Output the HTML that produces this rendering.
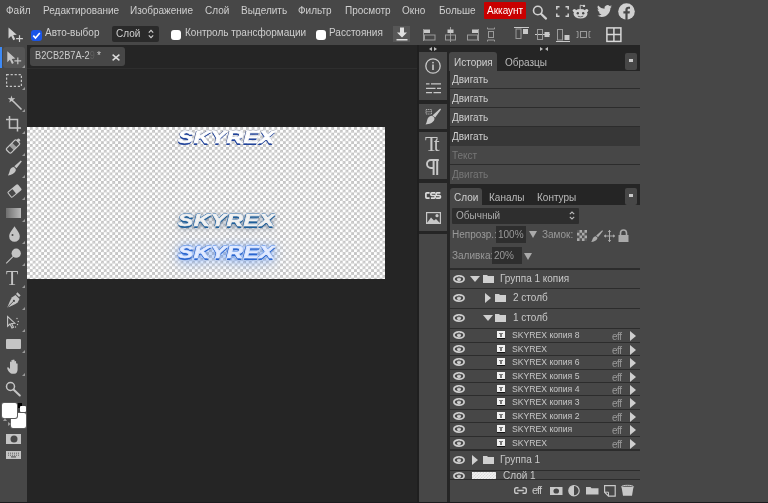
<!DOCTYPE html>
<html><head><meta charset="utf-8"><style>
*{margin:0;padding:0;box-sizing:border-box}
html,body{width:768px;height:503px;overflow:hidden;background:#474747;font-family:"Liberation Sans",sans-serif;font-size:10px;color:#cfcfcf}
.a{position:absolute}
.t{position:absolute;white-space:nowrap;line-height:12px}
svg{position:absolute;overflow:visible}
</style></head><body><div style="position:absolute;left:0;top:0;width:768px;height:503px;overflow:hidden;will-change:transform">
<div class="t" style="left:6px;top:5px;">Файл</div>
<div class="t" style="left:43px;top:5px;">Редактирование</div>
<div class="t" style="left:130px;top:5px;">Изображение</div>
<div class="t" style="left:205px;top:5px;">Слой</div>
<div class="t" style="left:241px;top:5px;">Выделить</div>
<div class="t" style="left:298px;top:5px;">Фильтр</div>
<div class="t" style="left:345px;top:5px;">Просмотр</div>
<div class="t" style="left:402px;top:5px;">Окно</div>
<div class="t" style="left:439px;top:5px;">Больше</div>
<div class="a" style="left:484px;top:2px;width:42px;height:17px;background:#c80000;border-radius:1px"></div>
<div class="t" style="left:487px;top:5px;color:#fff;">Аккаунт</div>
<svg style="left:532px;top:5px" width="16" height="15" viewBox="0 0 16 15"><circle cx="5.8" cy="5.5" r="4.3" fill="none" stroke="#d0d0d0" stroke-width="1.6"/><path d="M9 8.8L14 13.6" stroke="#d0d0d0" stroke-width="2.2" stroke-linecap="round"/></svg>
<svg style="left:556px;top:6px" width="13" height="11" viewBox="0 0 13 11"><path d="M0.8 3.5V0.8H3.5M9.5 0.8H12.2V3.5M12.2 7.5V10.2H9.5M3.5 10.2H0.8V7.5" fill="none" stroke="#d0d0d0" stroke-width="1.5"/></svg>
<svg style="left:572px;top:3px" width="17" height="16" viewBox="0 0 17 16"><ellipse cx="8.5" cy="10.8" rx="7" ry="4.8" fill="#d0d0d0"/><circle cx="2.4" cy="7.6" r="1.7" fill="#d0d0d0"/><circle cx="14.6" cy="7.6" r="1.7" fill="#d0d0d0"/><circle cx="5.8" cy="10.3" r="1.2" fill="#474747"/><circle cx="11.2" cy="10.3" r="1.2" fill="#474747"/><path d="M5.8 13.2Q8.5 14.6 11.2 13.2" fill="none" stroke="#474747" stroke-width="0.8"/><path d="M8.2 6V2.2L11.5 2.8" fill="none" stroke="#d0d0d0" stroke-width="0.9"/><circle cx="12" cy="2.9" r="1.2" fill="#d0d0d0"/></svg>
<svg style="left:597px;top:5px" width="15" height="12" viewBox="0 0 15 12"><path d="M15 1.4c-.55.25-1.15.4-1.75.48.63-.38 1.1-.98 1.33-1.68-.6.35-1.24.6-1.93.74A3.05 3.05 0 0 0 7.5 3.7 8.6 8.6 0 0 1 1.05.5a3.05 3.05 0 0 0 .94 4.06c-.5-.02-.97-.15-1.38-.38v.04c0 1.47 1.05 2.7 2.44 2.98-.45.12-.92.14-1.38.05a3.05 3.05 0 0 0 2.85 2.1A6.1 6.1 0 0 1 0 10.6 8.6 8.6 0 0 0 4.7 12c5.6 0 8.7-4.65 8.7-8.7v-.4c.6-.43 1.1-.97 1.5-1.5z" fill="#d0d0d0"/></svg>
<svg style="left:618px;top:3px" width="17" height="17" viewBox="0 0 17 17"><circle cx="8.5" cy="8.5" r="8.3" fill="#d0d0d0"/><path d="M9.6 17V10.6H11.6L11.9 8.3H9.6V6.9C9.6 6.2 9.9 5.8 10.8 5.8H12V3.8C11.6 3.75 11 3.7 10.3 3.7 8.6 3.7 7.4 4.7 7.4 6.6V8.3H5.4V10.6H7.4V17Z" fill="#474747"/></svg>
<svg style="left:8px;top:27px" width="16" height="15" viewBox="0 0 16 15"><path d="M0.5 0.5L0.5 11.5L3.2 8.9L5.3 13.2L7.2 12.3L5.2 8L8.8 7.8Z" fill="#d0d0d0"/><path d="M11.5 8.2V15M8.1 11.6H14.9" stroke="#d0d0d0" stroke-width="1.2"/></svg>
<div class="a" style="left:31px;top:30px;width:11px;height:11px;background:#1a55e8;border-radius:3px"></div>
<svg style="left:31px;top:30px" width="11" height="11" viewBox="0 0 11 11"><path d="M2.3 5.6L4.5 8L8.8 3" fill="none" stroke="#fff" stroke-width="1.6"/></svg>
<div class="t" style="left:45px;top:27px;">Авто-выбор</div>
<div class="a" style="left:112px;top:26px;width:47px;height:16px;background:#2a2a2a;border-radius:2px"></div>
<div class="t" style="left:116px;top:28px;">Слой</div>
<svg style="left:148px;top:29px" width="6" height="10" viewBox="0 0 6 10"><path d="M0.8 3.6L3 1.4L5.2 3.6M0.8 6.4L3 8.6L5.2 6.4" fill="none" stroke="#d0d0d0" stroke-width="1.1"/></svg>
<div class="a" style="left:171px;top:30px;width:10px;height:10px;background:#fff;border-radius:3px"></div>
<div class="t" style="left:185px;top:27px;">Контроль трансформации</div>
<div class="a" style="left:316px;top:30px;width:10px;height:10px;background:#fff;border-radius:3px"></div>
<div class="t" style="left:329px;top:27px;">Расстояния</div>
<div class="a" style="left:393px;top:26px;width:17px;height:16px;background:#575757;"></div>
<svg style="left:396px;top:27px" width="12" height="14" viewBox="0 0 12 14"><path d="M4 0.5H8V5.5H11L6 10.5L1 5.5H4Z" fill="#e0e0e0"/><rect x="0.5" y="12" width="11" height="1.5" fill="#e0e0e0"/></svg>
<svg style="left:423px;top:29px" width="13" height="13" viewBox="0 0 13 13"><rect x="0" y="0" width="1" height="12" fill="#9a9a9a"/><rect x="1" y="0.5" width="6" height="3.5" fill="#c8c8c8"/><rect x="1.5" y="6" width="10.5" height="5" fill="none" stroke="#9a9a9a" stroke-width="1"/></svg>
<svg style="left:445px;top:27px" width="12" height="15" viewBox="0 0 12 15"><rect x="5" y="0" width="1" height="15" fill="#9a9a9a"/><rect x="2.5" y="2.5" width="6" height="3.5" fill="#c8c8c8"/><rect x="0.5" y="8" width="10" height="5" fill="none" stroke="#9a9a9a" stroke-width="1"/></svg>
<svg style="left:467px;top:29px" width="12" height="13" viewBox="0 0 12 13"><rect x="11" y="0" width="1" height="12" fill="#9a9a9a"/><rect x="5" y="0.5" width="6" height="3.5" fill="#c8c8c8"/><rect x="0.5" y="6" width="10" height="5" fill="none" stroke="#9a9a9a" stroke-width="1"/></svg>
<svg style="left:487px;top:27px" width="8" height="15" viewBox="0 0 8 15"><path d="M0.5 0.5V2H7.5V0.5M0.5 14.5V13H7.5V14.5" fill="none" stroke="#9a9a9a" stroke-width="1"/><rect x="1.5" y="4.5" width="5" height="6" fill="none" stroke="#9a9a9a" stroke-width="1"/></svg>
<svg style="left:514px;top:27px" width="16" height="12" viewBox="0 0 16 12"><rect x="0" y="0" width="15" height="1" fill="#c8c8c8"/><rect x="2" y="2" width="5" height="9.5" fill="none" stroke="#9a9a9a" stroke-width="1"/><rect x="9" y="2" width="5" height="5" fill="#c8c8c8"/></svg>
<svg style="left:535px;top:29px" width="16" height="11" viewBox="0 0 16 11"><rect x="0" y="5" width="15" height="1" fill="#c8c8c8"/><rect x="2.5" y="0.5" width="5" height="10" fill="none" stroke="#9a9a9a" stroke-width="1"/><rect x="9.5" y="3" width="5" height="5" fill="#c8c8c8"/></svg>
<svg style="left:556px;top:29px" width="15" height="13" viewBox="0 0 15 13"><rect x="0" y="12" width="14" height="1" fill="#c8c8c8"/><rect x="1.5" y="0.5" width="5" height="10.5" fill="none" stroke="#9a9a9a" stroke-width="1"/><rect x="8.5" y="6" width="5" height="5" fill="#c8c8c8"/></svg>
<svg style="left:576px;top:31px" width="15" height="7" viewBox="0 0 15 7"><path d="M0.5 0.5H2V6.5H0.5M14.5 0.5H13V6.5H14.5" fill="none" stroke="#9a9a9a" stroke-width="1"/><rect x="4.5" y="0.5" width="6" height="6" fill="none" stroke="#9a9a9a" stroke-width="1"/></svg>
<svg style="left:606px;top:27px" width="16" height="15" viewBox="0 0 16 15"><rect x="0.9" y="0.9" width="14" height="13.5" fill="none" stroke="#d8d8d8" stroke-width="1.5"/><path d="M7.9 0.9V14.4M0.9 7.6H14.9" stroke="#d8d8d8" stroke-width="1.5"/></svg>
<div class="a" style="left:27px;top:45px;width:392px;height:458px;background:#252525;"></div>
<div class="a" style="left:27px;top:68px;width:392px;height:1px;background:#2e2e2e;"></div>
<div class="a" style="left:417px;top:45px;width:2px;height:458px;background:#1f1f1f;"></div>
<div class="a" style="left:30px;top:47px;width:95px;height:19px;background:#474747;border-radius:3px"></div>
<div class="t" style="left:35px;top:50px;width:65px;overflow:hidden;color:#ccc;font-size:10px;transform:scaleX(0.92);transform-origin:0 0">B2CB2B7A-2<span style="color:#5e5e5e">9</span></div>
<div class="t" style="left:97px;top:50px;color:#ccc;">*</div>
<svg style="left:112px;top:54px" width="8" height="7" viewBox="0 0 8 7"><path d="M0.6 0.6L7.4 6.4M7.4 0.6L0.6 6.4" stroke="#ddd" stroke-width="1.4"/></svg>
<div class="a" style="left:27px;top:127px;width:358px;height:152px;background:#fff;background-image:linear-gradient(45deg,#c4c4c4 25%,transparent 25%,transparent 75%,#c4c4c4 75%),linear-gradient(45deg,#c4c4c4 25%,transparent 25%,transparent 75%,#c4c4c4 75%);background-size:5.7px 5.7px;background-position:0 0,2.85px 2.85px"></div>
<div class="a" style="left:0px;top:45px;width:27px;height:458px;background:#474747;"></div>
<div class="a" style="left:3px;top:47px;width:22px;height:21px;background:#555;border-radius:3px"></div>
<div class="a" style="left:0px;top:47px;width:2px;height:21px;background:#3d8af7;"></div>
<svg style="left:7px;top:51px" width="15" height="14" viewBox="0 0 15 14"><path d="M0.3 0.3V11.3L2.9 8.8L5 13L6.8 12.1L4.8 7.9L8.4 7.6Z" fill="#c4c4c4"/><path d="M10.8 6.5V13.3M7.4 9.9H14.2" stroke="#c4c4c4" stroke-width="1.2"/></svg>
<svg style="left:22px;top:65px" width="3" height="3" viewBox="0 0 3 3"><path d="M3 0V3H0Z" fill="#9a9a9a"/></svg>
<svg style="left:6px;top:74px" width="16" height="13" viewBox="0 0 16 13"><rect x="0.6" y="0.6" width="14.8" height="11.8" fill="none" stroke="#c4c4c4" stroke-width="1.2" stroke-dasharray="2.2 1.8"/></svg>
<svg style="left:22px;top:87px" width="3" height="3" viewBox="0 0 3 3"><path d="M3 0V3H0Z" fill="#9a9a9a"/></svg>
<svg style="left:7px;top:95px" width="16" height="15" viewBox="0 0 16 15"><path d="M6 6L14.5 14.5" stroke="#c4c4c4" stroke-width="1.6"/><path d="M4.5 0.5L5.4 3.2L8.2 3L6.1 4.9L7 7.6L4.6 6.1L2.2 7.6L3 4.9L0.8 3L3.6 3.2Z" fill="#c4c4c4"/></svg>
<svg style="left:22px;top:109px" width="3" height="3" viewBox="0 0 3 3"><path d="M3 0V3H0Z" fill="#9a9a9a"/></svg>
<svg style="left:6px;top:116px" width="15" height="16" viewBox="0 0 15 16"><path d="M3.5 0V12H15M0 3.5H11.5V15.5" fill="none" stroke="#c4c4c4" stroke-width="1.5"/></svg>
<svg style="left:22px;top:131px" width="3" height="3" viewBox="0 0 3 3"><path d="M3 0V3H0Z" fill="#9a9a9a"/></svg>
<svg style="left:6px;top:138px" width="15" height="16" viewBox="0 0 15 16"><g transform="rotate(45 7 8.5)"><rect x="3.8" y="1.5" width="6.4" height="14" rx="1.5" fill="none" stroke="#c4c4c4" stroke-width="1.3"/><rect x="3.8" y="6.5" width="6.4" height="4" fill="#c4c4c4" opacity="0.7"/></g><circle cx="12.5" cy="2.2" r="1.6" fill="#c4c4c4"/></svg>
<svg style="left:22px;top:153px" width="3" height="3" viewBox="0 0 3 3"><path d="M3 0V3H0Z" fill="#9a9a9a"/></svg>
<svg style="left:8px;top:160px" width="14" height="16" viewBox="0 0 14 16"><path d="M12.8 0.6L13.8 1.6L8.5 8.3L6.3 6.3Z" fill="#c4c4c4"/><path d="M5.6 7C3.2 7.2 2 9.2 1.6 11.2C1.2 13 0.6 14.2 0 15.4C3 15.2 6.8 13.6 7.8 10.6C8.1 9.4 7.5 8 5.6 7Z" fill="#c4c4c4"/></svg>
<svg style="left:22px;top:175px" width="3" height="3" viewBox="0 0 3 3"><path d="M3 0V3H0Z" fill="#9a9a9a"/></svg>
<svg style="left:7px;top:184px" width="15" height="14" viewBox="0 0 15 14"><g transform="rotate(-40 7.5 7)"><rect x="0.7" y="3.2" width="13.6" height="7.6" rx="1.5" fill="#c4c4c4"/><rect x="1.7" y="4.2" width="5.4" height="5.6" rx="0.6" fill="#474747"/></g></svg>
<svg style="left:22px;top:197px" width="3" height="3" viewBox="0 0 3 3"><path d="M3 0V3H0Z" fill="#9a9a9a"/></svg>
<div class="a" style="left:6px;top:208px;width:15px;height:10px;background:linear-gradient(90deg,#6e6e6e,#b8b8b8)"></div>
<svg style="left:22px;top:219px" width="3" height="3" viewBox="0 0 3 3"><path d="M3 0V3H0Z" fill="#9a9a9a"/></svg>
<svg style="left:9px;top:226px" width="11" height="16" viewBox="0 0 11 16"><path d="M5.5 0.2C7.5 3.5 10.8 6.8 10.8 10.4A5.3 5.3 0 0 1 0.2 10.4C0.2 6.8 3.5 3.5 5.5 0.2Z" fill="#c4c4c4"/><circle cx="3.5" cy="9" r="1" fill="#474747"/></svg>
<svg style="left:22px;top:241px" width="3" height="3" viewBox="0 0 3 3"><path d="M3 0V3H0Z" fill="#9a9a9a"/></svg>
<svg style="left:5px;top:248px" width="17" height="17" viewBox="0 0 17 17"><circle cx="11.2" cy="5.2" r="4.6" fill="#c4c4c4"/><path d="M8.2 8.4L1.2 15.4" stroke="#c4c4c4" stroke-width="1.1"/></svg>
<svg style="left:22px;top:263px" width="3" height="3" viewBox="0 0 3 3"><path d="M3 0V3H0Z" fill="#9a9a9a"/></svg>
<div class="t" style="left:6px;top:268px;font-family:'Liberation Serif',serif;font-size:20px;line-height:20px;color:#c4c4c4">T</div>
<svg style="left:22px;top:285px" width="3" height="3" viewBox="0 0 3 3"><path d="M3 0V3H0Z" fill="#9a9a9a"/></svg>
<svg style="left:7px;top:292px" width="14" height="16" viewBox="0 0 14 16"><path d="M10.5 0.3L13.6 3.4L12 5L9 2Z" fill="#c4c4c4"/><path d="M8.5 3L12.5 7L10.6 10.6C8 12.5 4 14.2 0.3 15.6C1.7 11.8 3.2 7.8 5.1 5.2Z" fill="#c4c4c4"/><path d="M0.6 15.2L6 9.8" stroke="#474747" stroke-width="0.9"/><circle cx="6.9" cy="8.9" r="1.1" fill="#474747"/></svg>
<svg style="left:22px;top:307px" width="3" height="3" viewBox="0 0 3 3"><path d="M3 0V3H0Z" fill="#9a9a9a"/></svg>
<svg style="left:7px;top:316px" width="13" height="13" viewBox="0 0 13 13"><path d="M0.6 0.6V10.2L3 8L5 12L6.5 11.3L4.6 7.4L7.8 7.2Z" fill="none" stroke="#c4c4c4" stroke-width="1.1"/><circle cx="10" cy="2.5" r="0.7" fill="#c4c4c4"/><circle cx="11.3" cy="5.5" r="0.7" fill="#c4c4c4"/><circle cx="10.5" cy="8.5" r="0.7" fill="#c4c4c4"/><circle cx="8.5" cy="11" r="0.7" fill="#c4c4c4"/></svg>
<svg style="left:22px;top:329px" width="3" height="3" viewBox="0 0 3 3"><path d="M3 0V3H0Z" fill="#9a9a9a"/></svg>
<div class="a" style="left:6px;top:339px;width:15px;height:10px;background:#c4c4c4;border-radius:1px"></div>
<svg style="left:22px;top:350px" width="3" height="3" viewBox="0 0 3 3"><path d="M3 0V3H0Z" fill="#9a9a9a"/></svg>
<svg style="left:7px;top:359px" width="13" height="15" viewBox="0 0 13 15"><path d="M3 13.8C1.5 12.5 0.3 10.3 0.2 8.9C0.1 8.2 0.9 7.9 1.5 8.4L3 10V3.2C3 2.3 4.4 2.3 4.4 3.2V7.6V1.6C4.4 0.6 6 0.6 6 1.6V7.5V1.2C6 0.2 7.6 0.2 7.6 1.2V7.6V2.6C7.6 1.7 9.1 1.7 9.1 2.6V7.8V5C9.1 4.1 10.6 4.1 10.6 5V10.2C10.6 12.6 9.6 14.8 7.2 14.8H5C4.2 14.8 3.6 14.4 3 13.8Z" fill="#c4c4c4"/></svg>
<svg style="left:22px;top:373px" width="3" height="3" viewBox="0 0 3 3"><path d="M3 0V3H0Z" fill="#9a9a9a"/></svg>
<svg style="left:5px;top:381px" width="16" height="16" viewBox="0 0 16 16"><circle cx="5.5" cy="5.5" r="4" fill="none" stroke="#c4c4c4" stroke-width="1.5"/><path d="M8.5 8.5L14.8 14.5" stroke="#c4c4c4" stroke-width="2" stroke-linecap="round"/></svg>
<div class="a" style="left:17px;top:403px;width:5px;height:5px;background:#000;"></div>
<div class="a" style="left:20px;top:406px;width:6px;height:6px;background:#fff;border-radius:1px"></div>
<div class="a" style="left:11px;top:413px;width:15px;height:15px;background:#fff;border-radius:2px;box-shadow:0 0 0 1px #5a5a5a"></div>
<div class="a" style="left:2px;top:403px;width:15px;height:15px;background:#fff;border-radius:2px;box-shadow:0 0 0 1px #5a5a5a"></div>
<svg style="left:3px;top:418px" width="4" height="3" viewBox="0 0 4 3"><path d="M0 3L2 0L4 3Z" fill="#9a9a9a"/></svg>
<svg style="left:8px;top:422px" width="3" height="4" viewBox="0 0 3 4"><path d="M0 0L3 2L0 4Z" fill="#9a9a9a"/></svg>
<div class="a" style="left:6px;top:434px;width:15px;height:10px;background:#c4c4c4;"></div>
<svg style="left:10px;top:435px" width="8" height="8" viewBox="0 0 8 8"><circle cx="4" cy="4" r="3.5" fill="#474747"/></svg>
<div class="a" style="left:6px;top:451px;width:15px;height:8px;background:#c4c4c4;"></div>
<svg style="left:7px;top:452px" width="13" height="6" viewBox="0 0 13 6"><path d="M1 1.2H12M1 3.2H12" stroke="#474747" stroke-width="0.8" stroke-dasharray="1 1"/><rect x="4" y="4.4" width="5" height="1" fill="#474747"/></svg>
<div class="a" style="left:419px;top:45px;width:31px;height:458px;background:#252525;"></div>
<div class="a" style="left:447px;top:45px;width:3px;height:458px;background:#252525;"></div>
<div class="a" style="left:419px;top:52px;width:28px;height:48px;background:#474747;"></div>
<div class="a" style="left:419px;top:104px;width:28px;height:25px;background:#474747;"></div>
<div class="a" style="left:419px;top:132px;width:28px;height:47px;background:#474747;"></div>
<div class="a" style="left:419px;top:183px;width:28px;height:48px;background:#474747;"></div>
<div class="a" style="left:419px;top:234px;width:28px;height:269px;background:#474747;"></div>
<div class="a" style="left:450px;top:45px;width:190px;height:26px;background:#252525;"></div>
<div class="a" style="left:449px;top:52px;width:48px;height:19px;background:#474747;border-radius:3px 3px 0 0"></div>
<div class="t" style="left:454px;top:57px;">История</div>
<div class="t" style="left:505px;top:57px;color:#bbb;">Образцы</div>
<div class="a" style="left:625px;top:53px;width:12px;height:17px;background:#474747;border-radius:2px"></div>
<div class="a" style="left:450px;top:88px;width:190px;height:1px;background:#2c2c2c;"></div>
<div class="a" style="left:450px;top:107px;width:190px;height:1px;background:#2c2c2c;"></div>
<div class="a" style="left:450px;top:126px;width:190px;height:1px;background:#2c2c2c;"></div>
<div class="a" style="left:450px;top:145px;width:190px;height:1px;background:#2c2c2c;"></div>
<div class="a" style="left:450px;top:164px;width:190px;height:1px;background:#2c2c2c;"></div>
<div class="a" style="left:450px;top:127px;width:190px;height:19px;background:#373737;"></div>
<div class="t" style="left:452px;top:74px;">Двигать</div>
<div class="t" style="left:452px;top:93px;">Двигать</div>
<div class="t" style="left:452px;top:112px;">Двигать</div>
<div class="t" style="left:452px;top:131px;">Двигать</div>
<div class="t" style="left:452px;top:150px;color:#777;">Текст</div>
<div class="t" style="left:452px;top:169px;color:#777;">Двигать</div>
<div class="a" style="left:450px;top:184px;width:190px;height:21px;background:#252525;"></div>
<div class="a" style="left:450px;top:188px;width:32px;height:17px;background:#474747;border-radius:3px 3px 0 0"></div>
<div class="t" style="left:454px;top:192px;">Слои</div>
<div class="t" style="left:489px;top:192px;color:#bbb;">Каналы</div>
<div class="t" style="left:537px;top:192px;color:#bbb;">Контуры</div>
<div class="a" style="left:625px;top:188px;width:12px;height:17px;background:#474747;border-radius:2px"></div>
<div class="a" style="left:452px;top:208px;width:127px;height:16px;background:#2e2e2e;border-radius:1px"></div>
<div class="t" style="left:456px;top:210px;color:#aaa;">Обычный</div>
<div class="t" style="left:452px;top:229px;color:#999;">Непрозр.:</div>
<div class="a" style="left:496px;top:226px;width:30px;height:17px;background:#2e2e2e;"></div>
<div class="t" style="left:498px;top:229px;color:#999;">100%</div>
<div class="t" style="left:542px;top:229px;color:#999;">Замок:</div>
<div class="t" style="left:452px;top:250px;color:#999;">Заливка:</div>
<div class="a" style="left:492px;top:247px;width:30px;height:17px;background:#2e2e2e;"></div>
<div class="t" style="left:494px;top:250px;color:#999;">20%</div>
<div class="a" style="left:450px;top:268px;width:190px;height:2px;background:#2c2c2c;"></div>
<svg style="left:453px;top:275px" width="12" height="8" viewBox="0 0 12 8"><ellipse cx="6" cy="4" rx="5.1" ry="3.2" fill="none" stroke="#d0d0d0" stroke-width="1.7"/><circle cx="6" cy="4.2" r="1.9" fill="#d0d0d0"/><rect x="5.4" y="1.6" width="1.2" height="1.6" fill="#474747"/></svg>
<svg style="left:470px;top:276px" width="10" height="6" viewBox="0 0 10 6"><path d="M0 0H10L5 6Z" fill="#cfcfcf"/></svg>
<svg style="left:483px;top:275px" width="11" height="8" viewBox="0 0 11 8"><path d="M0 0H4L5 1H11V8H0Z" fill="#cfcfcf"/></svg>
<div class="t" style="left:500px;top:273px;color:#c8c8c8;">Группа 1 копия</div>
<div class="a" style="left:450px;top:288px;width:190px;height:1px;background:#2c2c2c;"></div>
<svg style="left:453px;top:294px" width="12" height="8" viewBox="0 0 12 8"><ellipse cx="6" cy="4" rx="5.1" ry="3.2" fill="none" stroke="#d0d0d0" stroke-width="1.7"/><circle cx="6" cy="4.2" r="1.9" fill="#d0d0d0"/><rect x="5.4" y="1.6" width="1.2" height="1.6" fill="#474747"/></svg>
<svg style="left:485px;top:293px" width="6" height="10" viewBox="0 0 6 10"><path d="M0 0V10L6 5Z" fill="#cfcfcf"/></svg>
<svg style="left:495px;top:294px" width="11" height="8" viewBox="0 0 11 8"><path d="M0 0H4L5 1H11V8H0Z" fill="#cfcfcf"/></svg>
<div class="t" style="left:513px;top:292px;color:#c8c8c8;">2 столб</div>
<div class="a" style="left:450px;top:308px;width:190px;height:1px;background:#2c2c2c;"></div>
<svg style="left:453px;top:314px" width="12" height="8" viewBox="0 0 12 8"><ellipse cx="6" cy="4" rx="5.1" ry="3.2" fill="none" stroke="#d0d0d0" stroke-width="1.7"/><circle cx="6" cy="4.2" r="1.9" fill="#d0d0d0"/><rect x="5.4" y="1.6" width="1.2" height="1.6" fill="#474747"/></svg>
<svg style="left:483px;top:315px" width="10" height="6" viewBox="0 0 10 6"><path d="M0 0H10L5 6Z" fill="#cfcfcf"/></svg>
<svg style="left:495px;top:314px" width="11" height="8" viewBox="0 0 11 8"><path d="M0 0H4L5 1H11V8H0Z" fill="#cfcfcf"/></svg>
<div class="t" style="left:513px;top:312px;color:#c8c8c8;">1 столб</div>
<div class="a" style="left:450px;top:328px;width:190px;height:1px;background:#2c2c2c;"></div>
<svg style="left:453px;top:331px" width="12" height="8" viewBox="0 0 12 8"><ellipse cx="6" cy="4" rx="5.1" ry="3.2" fill="none" stroke="#d0d0d0" stroke-width="1.7"/><circle cx="6" cy="4.2" r="1.9" fill="#d0d0d0"/><rect x="5.4" y="1.6" width="1.2" height="1.6" fill="#474747"/></svg>
<div class="a" style="left:497px;top:331px;width:8px;height:8px;background:#f0f0f0;border-bottom:1px solid #151515"></div>
<div class="a" style="left:499px;top:333px;width:4px;height:1px;background:#777;"></div>
<div class="a" style="left:500px;top:333px;width:2px;height:4px;background:#777;"></div>
<div class="t" style="left:512px;top:329px;color:#c8c8c8;font-size:9.6px;transform:scaleX(0.9);transform-origin:0 0">SKYREX копия 8</div>
<div class="t" style="left:612px;top:331px;color:#999;letter-spacing:-0.5px">eff</div>
<svg style="left:630px;top:331px" width="6" height="10" viewBox="0 0 6 10"><path d="M0 0V10L6 5Z" fill="#cfcfcf"/></svg>
<div class="a" style="left:450px;top:342px;width:190px;height:1px;background:#2c2c2c;"></div>
<svg style="left:453px;top:345px" width="12" height="8" viewBox="0 0 12 8"><ellipse cx="6" cy="4" rx="5.1" ry="3.2" fill="none" stroke="#d0d0d0" stroke-width="1.7"/><circle cx="6" cy="4.2" r="1.9" fill="#d0d0d0"/><rect x="5.4" y="1.6" width="1.2" height="1.6" fill="#474747"/></svg>
<div class="a" style="left:497px;top:345px;width:8px;height:8px;background:#f0f0f0;border-bottom:1px solid #151515"></div>
<div class="a" style="left:499px;top:347px;width:4px;height:1px;background:#777;"></div>
<div class="a" style="left:500px;top:347px;width:2px;height:4px;background:#777;"></div>
<div class="t" style="left:512px;top:343px;color:#c8c8c8;font-size:9.6px;transform:scaleX(0.9);transform-origin:0 0">SKYREX</div>
<div class="t" style="left:612px;top:345px;color:#999;letter-spacing:-0.5px">eff</div>
<svg style="left:630px;top:345px" width="6" height="10" viewBox="0 0 6 10"><path d="M0 0V10L6 5Z" fill="#cfcfcf"/></svg>
<div class="a" style="left:450px;top:355px;width:190px;height:1px;background:#2c2c2c;"></div>
<svg style="left:453px;top:358px" width="12" height="8" viewBox="0 0 12 8"><ellipse cx="6" cy="4" rx="5.1" ry="3.2" fill="none" stroke="#d0d0d0" stroke-width="1.7"/><circle cx="6" cy="4.2" r="1.9" fill="#d0d0d0"/><rect x="5.4" y="1.6" width="1.2" height="1.6" fill="#474747"/></svg>
<div class="a" style="left:497px;top:358px;width:8px;height:8px;background:#f0f0f0;border-bottom:1px solid #151515"></div>
<div class="a" style="left:499px;top:360px;width:4px;height:1px;background:#777;"></div>
<div class="a" style="left:500px;top:360px;width:2px;height:4px;background:#777;"></div>
<div class="t" style="left:512px;top:356px;color:#c8c8c8;font-size:9.6px;transform:scaleX(0.9);transform-origin:0 0">SKYREX копия 6</div>
<div class="t" style="left:612px;top:358px;color:#999;letter-spacing:-0.5px">eff</div>
<svg style="left:630px;top:358px" width="6" height="10" viewBox="0 0 6 10"><path d="M0 0V10L6 5Z" fill="#cfcfcf"/></svg>
<div class="a" style="left:450px;top:369px;width:190px;height:1px;background:#2c2c2c;"></div>
<svg style="left:453px;top:372px" width="12" height="8" viewBox="0 0 12 8"><ellipse cx="6" cy="4" rx="5.1" ry="3.2" fill="none" stroke="#d0d0d0" stroke-width="1.7"/><circle cx="6" cy="4.2" r="1.9" fill="#d0d0d0"/><rect x="5.4" y="1.6" width="1.2" height="1.6" fill="#474747"/></svg>
<div class="a" style="left:497px;top:372px;width:8px;height:8px;background:#f0f0f0;border-bottom:1px solid #151515"></div>
<div class="a" style="left:499px;top:374px;width:4px;height:1px;background:#777;"></div>
<div class="a" style="left:500px;top:374px;width:2px;height:4px;background:#777;"></div>
<div class="t" style="left:512px;top:370px;color:#c8c8c8;font-size:9.6px;transform:scaleX(0.9);transform-origin:0 0">SKYREX копия 5</div>
<div class="t" style="left:612px;top:372px;color:#999;letter-spacing:-0.5px">eff</div>
<svg style="left:630px;top:372px" width="6" height="10" viewBox="0 0 6 10"><path d="M0 0V10L6 5Z" fill="#cfcfcf"/></svg>
<div class="a" style="left:450px;top:382px;width:190px;height:1px;background:#2c2c2c;"></div>
<svg style="left:453px;top:385px" width="12" height="8" viewBox="0 0 12 8"><ellipse cx="6" cy="4" rx="5.1" ry="3.2" fill="none" stroke="#d0d0d0" stroke-width="1.7"/><circle cx="6" cy="4.2" r="1.9" fill="#d0d0d0"/><rect x="5.4" y="1.6" width="1.2" height="1.6" fill="#474747"/></svg>
<div class="a" style="left:497px;top:385px;width:8px;height:8px;background:#f0f0f0;border-bottom:1px solid #151515"></div>
<div class="a" style="left:499px;top:387px;width:4px;height:1px;background:#777;"></div>
<div class="a" style="left:500px;top:387px;width:2px;height:4px;background:#777;"></div>
<div class="t" style="left:512px;top:383px;color:#c8c8c8;font-size:9.6px;transform:scaleX(0.9);transform-origin:0 0">SKYREX копия 4</div>
<div class="t" style="left:612px;top:385px;color:#999;letter-spacing:-0.5px">eff</div>
<svg style="left:630px;top:385px" width="6" height="10" viewBox="0 0 6 10"><path d="M0 0V10L6 5Z" fill="#cfcfcf"/></svg>
<div class="a" style="left:450px;top:395px;width:190px;height:1px;background:#2c2c2c;"></div>
<svg style="left:453px;top:398px" width="12" height="8" viewBox="0 0 12 8"><ellipse cx="6" cy="4" rx="5.1" ry="3.2" fill="none" stroke="#d0d0d0" stroke-width="1.7"/><circle cx="6" cy="4.2" r="1.9" fill="#d0d0d0"/><rect x="5.4" y="1.6" width="1.2" height="1.6" fill="#474747"/></svg>
<div class="a" style="left:497px;top:398px;width:8px;height:8px;background:#f0f0f0;border-bottom:1px solid #151515"></div>
<div class="a" style="left:499px;top:400px;width:4px;height:1px;background:#777;"></div>
<div class="a" style="left:500px;top:400px;width:2px;height:4px;background:#777;"></div>
<div class="t" style="left:512px;top:396px;color:#c8c8c8;font-size:9.6px;transform:scaleX(0.9);transform-origin:0 0">SKYREX копия 3</div>
<div class="t" style="left:612px;top:398px;color:#999;letter-spacing:-0.5px">eff</div>
<svg style="left:630px;top:398px" width="6" height="10" viewBox="0 0 6 10"><path d="M0 0V10L6 5Z" fill="#cfcfcf"/></svg>
<div class="a" style="left:450px;top:409px;width:190px;height:1px;background:#2c2c2c;"></div>
<svg style="left:453px;top:412px" width="12" height="8" viewBox="0 0 12 8"><ellipse cx="6" cy="4" rx="5.1" ry="3.2" fill="none" stroke="#d0d0d0" stroke-width="1.7"/><circle cx="6" cy="4.2" r="1.9" fill="#d0d0d0"/><rect x="5.4" y="1.6" width="1.2" height="1.6" fill="#474747"/></svg>
<div class="a" style="left:497px;top:412px;width:8px;height:8px;background:#f0f0f0;border-bottom:1px solid #151515"></div>
<div class="a" style="left:499px;top:414px;width:4px;height:1px;background:#777;"></div>
<div class="a" style="left:500px;top:414px;width:2px;height:4px;background:#777;"></div>
<div class="t" style="left:512px;top:410px;color:#c8c8c8;font-size:9.6px;transform:scaleX(0.9);transform-origin:0 0">SKYREX копия 2</div>
<div class="t" style="left:612px;top:412px;color:#999;letter-spacing:-0.5px">eff</div>
<svg style="left:630px;top:412px" width="6" height="10" viewBox="0 0 6 10"><path d="M0 0V10L6 5Z" fill="#cfcfcf"/></svg>
<div class="a" style="left:450px;top:422px;width:190px;height:1px;background:#2c2c2c;"></div>
<svg style="left:453px;top:425px" width="12" height="8" viewBox="0 0 12 8"><ellipse cx="6" cy="4" rx="5.1" ry="3.2" fill="none" stroke="#d0d0d0" stroke-width="1.7"/><circle cx="6" cy="4.2" r="1.9" fill="#d0d0d0"/><rect x="5.4" y="1.6" width="1.2" height="1.6" fill="#474747"/></svg>
<div class="a" style="left:497px;top:425px;width:8px;height:8px;background:#f0f0f0;border-bottom:1px solid #151515"></div>
<div class="a" style="left:499px;top:427px;width:4px;height:1px;background:#777;"></div>
<div class="a" style="left:500px;top:427px;width:2px;height:4px;background:#777;"></div>
<div class="t" style="left:512px;top:423px;color:#c8c8c8;font-size:9.6px;transform:scaleX(0.9);transform-origin:0 0">SKYREX копия</div>
<div class="t" style="left:612px;top:425px;color:#999;letter-spacing:-0.5px">eff</div>
<svg style="left:630px;top:425px" width="6" height="10" viewBox="0 0 6 10"><path d="M0 0V10L6 5Z" fill="#cfcfcf"/></svg>
<div class="a" style="left:450px;top:436px;width:190px;height:1px;background:#2c2c2c;"></div>
<svg style="left:453px;top:439px" width="12" height="8" viewBox="0 0 12 8"><ellipse cx="6" cy="4" rx="5.1" ry="3.2" fill="none" stroke="#d0d0d0" stroke-width="1.7"/><circle cx="6" cy="4.2" r="1.9" fill="#d0d0d0"/><rect x="5.4" y="1.6" width="1.2" height="1.6" fill="#474747"/></svg>
<div class="a" style="left:497px;top:439px;width:8px;height:8px;background:#f0f0f0;border-bottom:1px solid #151515"></div>
<div class="a" style="left:499px;top:441px;width:4px;height:1px;background:#777;"></div>
<div class="a" style="left:500px;top:441px;width:2px;height:4px;background:#777;"></div>
<div class="t" style="left:512px;top:437px;color:#c8c8c8;font-size:9.6px;transform:scaleX(0.9);transform-origin:0 0">SKYREX</div>
<div class="t" style="left:612px;top:439px;color:#999;letter-spacing:-0.5px">eff</div>
<svg style="left:630px;top:439px" width="6" height="10" viewBox="0 0 6 10"><path d="M0 0V10L6 5Z" fill="#cfcfcf"/></svg>
<div class="a" style="left:450px;top:449px;width:190px;height:2px;background:#2c2c2c;"></div>
<svg style="left:453px;top:456px" width="12" height="8" viewBox="0 0 12 8"><ellipse cx="6" cy="4" rx="5.1" ry="3.2" fill="none" stroke="#d0d0d0" stroke-width="1.7"/><circle cx="6" cy="4.2" r="1.9" fill="#d0d0d0"/><rect x="5.4" y="1.6" width="1.2" height="1.6" fill="#474747"/></svg>
<svg style="left:472px;top:455px" width="6" height="10" viewBox="0 0 6 10"><path d="M0 0V10L6 5Z" fill="#cfcfcf"/></svg>
<svg style="left:483px;top:456px" width="11" height="8" viewBox="0 0 11 8"><path d="M0 0H4L5 1H11V8H0Z" fill="#cfcfcf"/></svg>
<div class="t" style="left:500px;top:454px;color:#c8c8c8;">Группа 1</div>
<div class="a" style="left:450px;top:470px;width:190px;height:1px;background:#2c2c2c;"></div>
<svg style="left:453px;top:472px" width="12" height="8" viewBox="0 0 12 8"><ellipse cx="6" cy="4" rx="5.1" ry="3.2" fill="none" stroke="#d0d0d0" stroke-width="1.7"/><circle cx="6" cy="4.2" r="1.9" fill="#d0d0d0"/><rect x="5.4" y="1.6" width="1.2" height="1.6" fill="#474747"/></svg>
<div class="a" style="left:472px;top:472px;width:24px;height:7px;background:#f2f2f2;background-image:linear-gradient(45deg,#d8d8d8 25%,transparent 25%,transparent 75%,#d8d8d8 75%),linear-gradient(45deg,#d8d8d8 25%,transparent 25%,transparent 75%,#d8d8d8 75%);background-size:3px 3px;background-position:0 0,1.5px 1.5px"></div>
<div class="t" style="left:503px;top:470px;color:#c8c8c8;">Слой 1</div>
<div class="a" style="left:450px;top:479px;width:190px;height:24px;background:#474747;"></div>
<div class="a" style="left:450px;top:479px;width:190px;height:1px;background:#2c2c2c;"></div>
<div class="a" style="left:0px;top:502px;width:768px;height:1px;background:#1c1b1e;"></div>
<svg style="left:429px;top:47px" width="8" height="4" viewBox="0 0 8 4"><path d="M0 2L3 0V4Z M8 2L5 0V4Z" fill="#bbb"/></svg>
<svg style="left:540px;top:47px" width="8" height="4" viewBox="0 0 8 4"><path d="M0 0L3 2L0 4Z M8 0L5 2L8 4Z" fill="#bbb"/></svg>
<svg style="left:425px;top:58px" width="16" height="16" viewBox="0 0 16 16"><circle cx="8" cy="8" r="7.2" fill="none" stroke="#c8c8c8" stroke-width="1.3"/><rect x="7.2" y="6.5" width="1.6" height="5.5" fill="#c8c8c8"/><circle cx="8" cy="4.6" r="0.9" fill="#c8c8c8"/></svg>
<svg style="left:426px;top:83px" width="15" height="11" viewBox="0 0 15 11"><path d="M0 0.8H3.5M5 0.8H15M0 5.3H9.5M11 5.3H15M0 9.6H6M7.5 9.6H15" stroke="#c8c8c8" stroke-width="1.2"/></svg>
<svg style="left:425px;top:108px" width="16" height="17" viewBox="0 0 16 17"><path d="M15.2 0.4L16 1.6L10.2 9.6L7.4 7.4Z" fill="#c8c8c8"/><path d="M6.8 7.8C4 8 2.6 10 2.2 12C1.9 13.8 1.2 15.2 0.6 16.6C4.2 16.4 8.4 14.8 9.4 11.6C9.8 10.2 9 8.4 6.8 7.8Z" fill="#c8c8c8"/><path d="M1 1.5H6.5V6H1Z" fill="none" stroke="#c8c8c8" stroke-width="1" stroke-dasharray="1.2 0.6" opacity="0.75"/><path d="M1 3.7H6.5" stroke="#c8c8c8" stroke-width="0.8" opacity="0.6"/></svg>
<div class="t" style="left:425px;top:134px;font-family:'Liberation Serif',serif;font-size:21px;line-height:21px;color:#c8c8c8;letter-spacing:-4px">Tt</div>
<svg style="left:426px;top:159px" width="13" height="16" viewBox="0 0 13 16"><path d="M12.8 1H5A4 4 0 0 0 5 9H7.4" fill="none" stroke="#c8c8c8" stroke-width="1.9"/><rect x="6.6" y="1" width="2" height="15" fill="#c8c8c8"/><rect x="10.2" y="1" width="2" height="15" fill="#c8c8c8"/></svg>
<svg style="left:425px;top:192px" width="16" height="7" viewBox="0 0 16 7"><path d="M4.6 0.9H1.8Q0.9 0.9 0.9 1.8V5.2Q0.9 6.1 1.8 6.1H4.6M10.2 0.9H6.8Q5.9 0.9 5.9 1.8V2.6Q5.9 3.5 6.8 3.5H9.3Q10.2 3.5 10.2 4.4V5.2Q10.2 6.1 9.3 6.1H5.9M15.4 0.9H12Q11.1 0.9 11.1 1.8V2.6Q11.1 3.5 12 3.5H14.5Q15.4 3.5 15.4 4.4V5.2Q15.4 6.1 14.5 6.1H11.1" fill="none" stroke="#dcdcdc" stroke-width="1.7"/></svg>
<svg style="left:426px;top:212px" width="15" height="12" viewBox="0 0 15 12"><rect x="0.6" y="0.6" width="13.8" height="10.8" fill="none" stroke="#c8c8c8" stroke-width="1.2"/><path d="M0.6 11.4L5 5.5L8 8.5L10 7L14.4 11.4Z" fill="#c8c8c8"/><circle cx="11" cy="3.7" r="1.6" fill="#c8c8c8"/></svg>
<div class="a" style="left:629px;top:59px;width:4px;height:3px;background:#c8c8c8;"></div>
<div class="a" style="left:629px;top:194px;width:4px;height:3px;background:#c8c8c8;"></div>
<svg style="left:569px;top:211px" width="6" height="9" viewBox="0 0 6 9"><path d="M0.8 3.2L3 1L5.2 3.2M0.8 5.8L3 8L5.2 5.8" fill="none" stroke="#bbb" stroke-width="1.1"/></svg>
<svg style="left:529px;top:231px" width="8" height="7" viewBox="0 0 8 7"><path d="M0 0H8L4 7Z" fill="#aaa"/></svg>
<svg style="left:524px;top:253px" width="8" height="7" viewBox="0 0 8 7"><path d="M0 0H8L4 7Z" fill="#aaa"/></svg>
<svg style="left:577px;top:230px" width="10" height="11" viewBox="0 0 10 11"><rect x="0" y="0" width="10" height="11" fill="#aaa"/><path d="M0 0H2.5V2.75H0ZM5 0H7.5V2.75H5ZM2.5 2.75H5V5.5H2.5ZM7.5 2.75H10V5.5H7.5ZM0 5.5H2.5V8.25H0ZM5 5.5H7.5V8.25H5ZM2.5 8.25H5V11H2.5ZM7.5 8.25H10V11H7.5Z" fill="#555"/></svg>
<svg style="left:591px;top:230px" width="12" height="12" viewBox="0 0 12 12"><path d="M11.2 0.3L12 1.1L7 7.2L5.2 5.6Z" fill="#aaa"/><path d="M4.6 6.2C2.6 6.4 1.8 8 1.4 9.6C1.1 10.6 0.7 11.4 0.2 12C2.6 11.9 5.6 10.8 6.4 8.6C6.6 7.6 6.1 6.6 4.6 6.2Z" fill="#aaa"/></svg>
<svg style="left:604px;top:230px" width="11" height="12" viewBox="0 0 11 12"><path d="M5.5 0V12M0 6H11" stroke="#aaa" stroke-width="1"/><path d="M5.5 0L3.8 2H7.2ZM5.5 12L3.8 10H7.2ZM0 6L2 4.3V7.7ZM11 6L9 4.3V7.7Z" fill="#aaa"/></svg>
<svg style="left:618px;top:229px" width="11" height="13" viewBox="0 0 11 13"><path d="M2.5 6V4A3 3 0 0 1 8.5 4V6" fill="none" stroke="#aaa" stroke-width="1.6"/><rect x="0.5" y="6" width="10" height="7" fill="#aaa"/></svg>
<svg style="left:514px;top:487px" width="13" height="7" viewBox="0 0 13 7"><path d="M4.5 0.7H2.6A1.9 1.9 0 0 0 0.7 2.6V4.4A1.9 1.9 0 0 0 2.6 6.3H4.5M8.5 0.7H10.4A1.9 1.9 0 0 1 12.3 2.6V4.4A1.9 1.9 0 0 1 10.4 6.3H8.5M3.2 3.5H9.8" fill="none" stroke="#c8c8c8" stroke-width="1.4"/></svg>
<div class="t" style="left:532px;top:484px;color:#c8c8c8;font-size:11px;letter-spacing:-1px">eff</div>
<svg style="left:550px;top:487px" width="13" height="8" viewBox="0 0 13 8"><rect x="0" y="0" width="12.5" height="8" fill="#c8c8c8"/><ellipse cx="6.25" cy="4" rx="2.8" ry="2.6" fill="#474747"/></svg>
<svg style="left:568px;top:485px" width="13" height="12" viewBox="0 0 13 12"><circle cx="6" cy="5.7" r="5.2" fill="none" stroke="#c8c8c8" stroke-width="1.2"/><path d="M6 0.5A5.2 5.2 0 0 0 6 10.9Z" fill="#c8c8c8"/></svg>
<svg style="left:586px;top:487px" width="13" height="8" viewBox="0 0 13 8"><path d="M0 0H4.5L5.5 1.3H12.5V7.5H0Z" fill="#c8c8c8"/></svg>
<svg style="left:604px;top:485px" width="12" height="12" viewBox="0 0 12 12"><path d="M0.6 0.6H11.2V11.2H4.5L0.6 7.2Z" fill="none" stroke="#c8c8c8" stroke-width="1.2"/><path d="M0.6 7.2H4.5V11.2" fill="none" stroke="#c8c8c8" stroke-width="1"/></svg>
<svg style="left:621px;top:485px" width="13" height="11" viewBox="0 0 13 11"><path d="M0.5 1.8H12.5L11 10.8H2Z" fill="#c8c8c8"/><ellipse cx="6.5" cy="1.8" rx="6" ry="1.5" fill="none" stroke="#c8c8c8" stroke-width="1"/></svg>
<div class="t" style="left:178px;top:129px;font-family:'Liberation Sans',sans-serif;font-weight:bold;font-style:italic;font-size:16.5px;line-height:16px;letter-spacing:0.3px;transform:scaleX(1.39);transform-origin:0 0;color:#ffffff;-webkit-text-stroke:0.7px #ffffff;text-shadow:-0.4px 1.8px 0 #22449a, -0.8px 0.4px 0 rgba(60,80,140,0.8), 0 0 1.5px rgba(40,60,120,0.7);">SKYREX</div>
<div class="t" style="left:178px;top:212px;font-family:'Liberation Sans',sans-serif;font-weight:bold;font-style:italic;font-size:16.5px;line-height:16px;letter-spacing:0.3px;transform:scaleX(1.39);transform-origin:0 0;color:#f2f2f2;-webkit-text-stroke:0.7px #eeeeee;text-shadow:0 1.8px 0 #1f5f9a, -0.8px 0.3px 0 #2a6aa8, 0.6px 0 0 #3a78b8, 0 -0.7px 0 #5a8ab8, 0 1px 2px rgba(20,55,95,0.9), 0 2px 5px rgba(30,60,100,0.7);">SKYREX</div>
<div class="t" style="left:178px;top:244px;font-family:'Liberation Sans',sans-serif;font-weight:bold;font-style:italic;font-size:16.5px;line-height:16px;letter-spacing:0.3px;transform:scaleX(1.39);transform-origin:0 0;color:#e4ecff;-webkit-text-stroke:0.7px #dbe6ff;text-shadow:0 1.8px 0 #2a66d0, -0.8px 0.3px 0 #3a70d0, 0 -0.6px 0 #6a9ae8, 0 0 2px #3a70d0, 0 2px 8px rgba(70,130,240,0.95), 0 3px 14px rgba(100,160,255,0.75);">SKYREX</div>
</div></body></html>
